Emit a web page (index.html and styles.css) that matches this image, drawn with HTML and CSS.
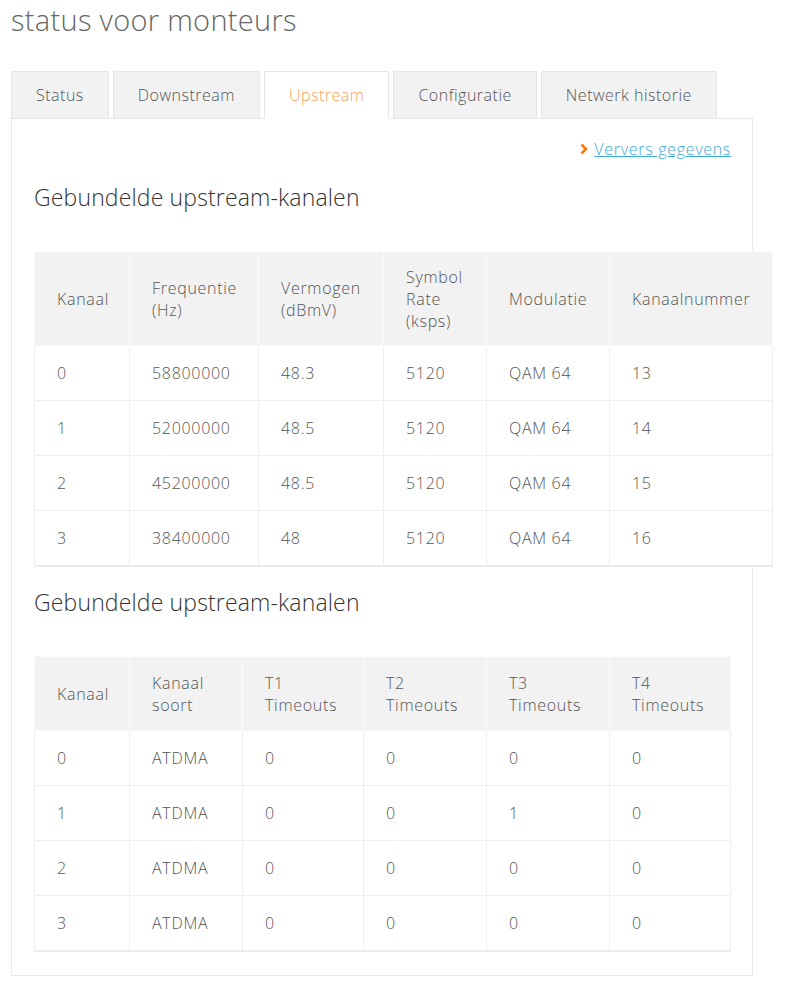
FILE: index.html
```html
<!DOCTYPE html>
<html lang="nl">
<head>
    <meta charset="UTF-8">
    <meta name="viewport" content="width=device-width, initial-scale=1.0">
    <title>status voor monteurs</title>
    <link rel="stylesheet" href="styles.css">
</head>
<body>
    <h1 class="page-title">status voor monteurs</h1>

    <ul class="tabs">
        <li class="tab">Status</li>
        <li class="tab">Downstream</li>
        <li class="tab tab-active">Upstream</li>
        <li class="tab">Configuratie</li>
        <li class="tab">Netwerk historie</li>
    </ul>

    <div class="tab-panel">
        <div class="refresh-row">
            <svg class="chevron" width="8" height="12" viewBox="0 0 8 12">
                <polyline points="1.5,1.5 6,6 1.5,10.5" fill="none" stroke="#f27c12" stroke-width="2.6"/>
            </svg>
            <a href="#" class="refresh-link">Ververs gegevens</a>
        </div>

        <h2 class="section-title">Gebundelde upstream-kanalen</h2>
        <table class="data-table table-channels">
            <colgroup>
                <col style="width: 95px">
                <col style="width: 129px">
                <col style="width: 125px">
                <col style="width: 103px">
                <col style="width: 123px">
                <col style="width: 163px">
            </colgroup>
            <thead>
                <tr>
                    <th>Kanaal</th>
                    <th>Frequentie<br>(Hz)</th>
                    <th>Vermogen<br>(dBmV)</th>
                    <th>Symbol<br>Rate<br>(ksps)</th>
                    <th>Modulatie</th>
                    <th>Kanaalnummer</th>
                </tr>
            </thead>
            <tbody>
                <tr><td>0</td><td>58800000</td><td>48.3</td><td>5120</td><td>QAM 64</td><td>13</td></tr>
                <tr><td>1</td><td>52000000</td><td>48.5</td><td>5120</td><td>QAM 64</td><td>14</td></tr>
                <tr><td>2</td><td>45200000</td><td>48.5</td><td>5120</td><td>QAM 64</td><td>15</td></tr>
                <tr><td>3</td><td>38400000</td><td>48</td><td>5120</td><td>QAM 64</td><td>16</td></tr>
            </tbody>
        </table>

        <h2 class="section-title">Gebundelde upstream-kanalen</h2>
        <table class="data-table table-timeouts">
            <colgroup>
                <col style="width: 95px">
                <col style="width: 113px">
                <col style="width: 121px">
                <col style="width: 123px">
                <col style="width: 123px">
                <col style="width: 121px">
            </colgroup>
            <thead>
                <tr>
                    <th>Kanaal</th>
                    <th>Kanaal<br>soort</th>
                    <th>T1<br>Timeouts</th>
                    <th>T2<br>Timeouts</th>
                    <th>T3<br>Timeouts</th>
                    <th>T4<br>Timeouts</th>
                </tr>
            </thead>
            <tbody>
                <tr><td>0</td><td>ATDMA</td><td>0</td><td>0</td><td>0</td><td>0</td></tr>
                <tr><td>1</td><td>ATDMA</td><td>0</td><td>0</td><td>1</td><td>0</td></tr>
                <tr><td>2</td><td>ATDMA</td><td>0</td><td>0</td><td>0</td><td>0</td></tr>
                <tr><td>3</td><td>ATDMA</td><td>0</td><td>0</td><td>0</td><td>0</td></tr>
            </tbody>
        </table>
    </div>
</body>
</html>
```

FILE: styles.css
```css
/* Page */
body {
    margin: 0;
    padding: 0 11px;
    font-family: "Open Sans", "Noto Sans", Arial, sans-serif;
    font-weight: 300;
    color: #555;
    background: #fff;
}

.page-title {
    margin: 0 0 31px;
    font-size: 29px;
    line-height: 40px;
    font-weight: 300;
    color: #666;
    letter-spacing: 0.3px;
}

/* Tabs */
.tabs {
    display: flex;
    list-style: none;
    margin: 0 0 -1px;
    padding: 0;
}

.tab {
    height: 46px;
    line-height: 46px;
    padding: 0 24px;
    margin-right: 4px;
    font-size: 16px;
    letter-spacing: 0.5px;
    color: #555;
    background: #f2f2f2;
    border: 1px solid #e6e6e6;
    position: relative;
}

.tab-active {
    background: #fff;
    color: #f9a05d;
    border-bottom-color: #fff;
    z-index: 1;
}

.tab-panel {
    width: 697px;
    padding: 19px 21px 23px 22px;
    border: 1px solid #e8e8e8;
}

/* Refresh link */
.refresh-row {
    display: flex;
    justify-content: flex-end;
    align-items: center;
    line-height: 22px;
    font-size: 16px;
    letter-spacing: 0.7px;
    margin-bottom: 22px;
}

.chevron {
    margin-right: 6px;
}

.refresh-link {
    color: #3ea9dd;
    text-decoration: underline;
}

.section-title {
    margin: 0 0 39px;
    font-size: 23px;
    line-height: 30px;
    font-weight: 300;
    letter-spacing: 0.15px;
    color: #333;
}

/* Tables */
.data-table {
    border-collapse: collapse;
    table-layout: fixed;
    font-size: 16px;
    line-height: 22px;
    letter-spacing: 0.7px;
    color: #555;
    background: #fff;
    border-bottom: 2px solid #ebebeb;
}

.table-channels {
    width: 738px;
    margin-bottom: 20px;
}

.table-timeouts {
    width: 696px;
}

.data-table th,
.data-table td {
    border: 1px solid #eeeeee;
    text-align: left;
    vertical-align: middle;
    padding: 16px 8px 16px 22px;
}

.data-table th {
    font-weight: 300;
    background: #f2f2f2;
    border-color: #fafafa;
}

.table-channels th {
    padding-top: 14px;
    padding-bottom: 13px;
}

.table-timeouts th {
    padding-top: 15px;
    padding-bottom: 14px;
}
```
